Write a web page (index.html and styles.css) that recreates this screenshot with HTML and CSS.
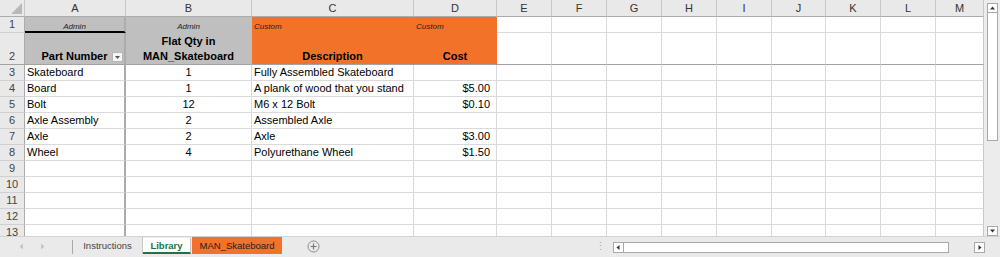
FILE: index.html
```html
<!DOCTYPE html>
<html lang="en">
<head>
    <meta charset="UTF-8">
    <title>Library</title>
    <link rel="stylesheet" href="styles.css">
</head>
<body>
    <div class="book">
        <div class="main">
            <div class="grid">
                <!-- column letters -->
                <div class="row hdr">
                    <div class="corner"><svg width="25" height="16"><polygon points="22,3 22,14 11,14" fill="#b9b9b9"/></svg></div>
                    <div>A</div><div>B</div><div>C</div><div>D</div><div>E</div><div>F</div><div>G</div>
                    <div>H</div><div>I</div><div>J</div><div>K</div><div>L</div><div>M</div>
                </div>

                <div class="row r1">
                    <div class="rh">1</div>
                    <div class="gray tag center a1">Admin</div>
                    <div class="gray tag center">Admin</div>
                    <div class="orange tag">Custom</div>
                    <div class="orange tag">Custom</div>
                    <div></div><div></div><div></div><div></div><div></div><div></div><div></div><div></div><div></div>
                </div>

                <div class="row r2">
                    <div class="rh">2</div>
                    <div class="gray hd">Part Number
                        <span class="filter"><svg width="9" height="8"><polygon points="2,3 7,3 4.5,6" fill="#555"/></svg></span>
                    </div>
                    <div class="gray hd"><span>Flat Qty in<br>MAN_Skateboard</span></div>
                    <div class="orange hd">Description</div>
                    <div class="orange hd">Cost</div>
                    <div></div><div></div><div></div><div></div><div></div><div></div><div></div><div></div><div></div>
                </div>

                <div class="row">
                    <div class="rh">3</div>
                    <div>Skateboard</div><div class="num">1</div><div>Fully Assembled Skateboard</div><div class="money"></div>
                    <div></div><div></div><div></div><div></div><div></div><div></div><div></div><div></div><div></div>
                </div>
                <div class="row">
                    <div class="rh">4</div>
                    <div>Board</div><div class="num">1</div><div>A plank of wood that you stand</div><div class="money">$5.00</div>
                    <div></div><div></div><div></div><div></div><div></div><div></div><div></div><div></div><div></div>
                </div>
                <div class="row">
                    <div class="rh">5</div>
                    <div>Bolt</div><div class="num">12</div><div>M6 x 12 Bolt</div><div class="money">$0.10</div>
                    <div></div><div></div><div></div><div></div><div></div><div></div><div></div><div></div><div></div>
                </div>
                <div class="row">
                    <div class="rh">6</div>
                    <div>Axle Assembly</div><div class="num">2</div><div>Assembled Axle</div><div class="money"></div>
                    <div></div><div></div><div></div><div></div><div></div><div></div><div></div><div></div><div></div>
                </div>
                <div class="row">
                    <div class="rh">7</div>
                    <div>Axle</div><div class="num">2</div><div>Axle</div><div class="money">$3.00</div>
                    <div></div><div></div><div></div><div></div><div></div><div></div><div></div><div></div><div></div>
                </div>
                <div class="row">
                    <div class="rh">8</div>
                    <div>Wheel</div><div class="num">4</div><div>Polyurethane Wheel</div><div class="money">$1.50</div>
                    <div></div><div></div><div></div><div></div><div></div><div></div><div></div><div></div><div></div>
                </div>

                <!-- empty rows -->
                <div class="row">
                    <div class="rh">9</div>
                    <div></div><div></div><div></div><div></div><div></div><div></div><div></div><div></div><div></div><div></div><div></div><div></div><div></div>
                </div>
                <div class="row">
                    <div class="rh">10</div>
                    <div></div><div></div><div></div><div></div><div></div><div></div><div></div><div></div><div></div><div></div><div></div><div></div><div></div>
                </div>
                <div class="row">
                    <div class="rh">11</div>
                    <div></div><div></div><div></div><div></div><div></div><div></div><div></div><div></div><div></div><div></div><div></div><div></div><div></div>
                </div>
                <div class="row">
                    <div class="rh">12</div>
                    <div></div><div></div><div></div><div></div><div></div><div></div><div></div><div></div><div></div><div></div><div></div><div></div><div></div>
                </div>
                <div class="row">
                    <div class="rh">13</div>
                    <div></div><div></div><div></div><div></div><div></div><div></div><div></div><div></div><div></div><div></div><div></div><div></div><div></div>
                </div>
            </div>

            <div class="vscroll">
                <div class="sbtn"><svg width="9" height="8"><polygon points="4.5,2.5 7,5.5 2,5.5" fill="#333"/></svg></div>
                <div class="vthumb"></div>
                <div class="sbtn down"><svg width="9" height="8"><polygon points="2,2.5 7,2.5 4.5,5.5" fill="#333"/></svg></div>
            </div>
        </div>

        <div class="tabbar">
            <div class="tabnav">
                <svg width="5" height="7"><polygon points="4,0.5 4,6.5 0.5,3.5" fill="#c4c4c4"/></svg>
                <svg width="5" height="7"><polygon points="1,0.5 1,6.5 4.5,3.5" fill="#c4c4c4"/></svg>
            </div>
            <div class="tabs">
                <div class="tab">Instructions</div>
                <div class="tab active">Library</div>
                <div class="tab orange-tab">MAN_Skateboard</div>
            </div>
            <div class="addsheet">
                <svg width="13" height="13"><circle cx="6.5" cy="6.5" r="5.5" fill="none" stroke="#8c8c8c"/><path d="M6.5 3.5v6M3.5 6.5h6" stroke="#777" stroke-width="1.2"/></svg>
            </div>
            <div class="dots">&#8942;</div>
            <div class="hscroll">
                <div class="sbtn"><svg width="9" height="9"><polygon points="2.5,4.5 5.5,2 5.5,7" fill="#333"/></svg></div>
                <div class="hthumb"></div>
                <div class="htrack"></div>
                <div class="sbtn"><svg width="9" height="9"><polygon points="3.5,2 6.5,4.5 3.5,7" fill="#333"/></svg></div>
            </div>
        </div>
    </div>
</body>
</html>
```

FILE: styles.css
```css
* {
    margin: 0;
    padding: 0;
    box-sizing: border-box;
}

body {
    font-family: "Liberation Sans", Arial, sans-serif;
    font-size: 11px;
    color: #000;
    background: #fff;
    width: 1000px;
    height: 257px;
    overflow: hidden;
}

.main {
    display: flex;
    height: 236px;
    overflow: hidden;
}

.grid {
    width: 984px;
}

.row {
    display: grid;
    grid-template-columns: 25px 101px 126px 162px 83px 55px 55px 55px 55px 55px 54px 55px 55px 48px;
    height: 16px;
}

.row > div {
    border-right: 1px solid #dadada;
    border-bottom: 1px solid #dadada;
    padding: 0 2px;
    line-height: 15px;
    white-space: nowrap;
    overflow: hidden;
}

/* frozen pane line after column A */
.row > div:nth-child(2) {
    border-right: 2px solid #acacac;
}

.row > div:last-child {
    border-right-color: #c8c8c8;
}

.hdr {
    height: 17px;
    background: #e9e9e9;
}

.row.hdr > div {
    text-align: center;
    color: #333;
    line-height: 16px;
    border-right: 1px solid #c8c8c8;
    border-bottom: 1px solid #ababab;
}

.corner {
    padding: 0 !important;
}

.corner svg {
    display: block;
}

.row > .rh {
    background: #e9e9e9;
    color: #444;
    text-align: center;
    padding: 0;
    border-right: 1px solid #ababab;
    border-bottom: 1px solid #d0d0d0;
}

.r2 {
    height: 32px;
}

.r2 > div {
    display: flex;
    flex-direction: column;
    justify-content: flex-end;
}

/* frozen pane line under row 2 */
.row.r2 > div {
    border-bottom: 1px solid #a2a2a2;
}

.row > .gray {
    background: #bfbfbf;
    border-color: transparent;
}

.row > .orange {
    background: #f27229;
    border-color: transparent;
}

.row > .a1 {
    border-bottom: 2px solid #000;
}

.tag {
    font-style: italic;
    font-size: 8px;
    color: #222;
    padding-top: 2px !important;
}

.center {
    text-align: center;
}

.hd {
    font-weight: bold;
    text-align: center;
    position: relative;
}

.filter {
    position: absolute;
    right: 1px;
    bottom: 2px;
    width: 11px;
    height: 10px;
    border: 1px solid #b5b5b5;
    background: #f5f5f5;
}

.filter svg {
    display: block;
}

.num {
    text-align: center;
}

.row > .money {
    text-align: right;
    padding-right: 6px;
}

/* scrollbars */
.vscroll {
    width: 16px;
    background: #ececec;
    display: flex;
    flex-direction: column;
    align-items: center;
    padding: 3px 0 0 1px;
}

.sbtn {
    width: 11px;
    height: 10px;
    border: 1px solid #a9a9a9;
    background: #fff;
}

.sbtn svg {
    display: block;
}

.vthumb {
    width: 11px;
    height: 128px;
    border: 1px solid #a9a9a9;
    border-top: none;
    background: #fff;
}

.vscroll .down {
    margin-top: auto;
    margin-bottom: 0;
}

.tabbar {
    display: flex;
    height: 21px;
    background: #eaeaea;
    border-top: 1px solid #d2d2d2;
}

.tabnav {
    width: 72px;
    display: flex;
    align-items: center;
    gap: 16px;
    padding: 0 0 2px 19px;
}

.tabs {
    display: flex;
    border-left: 1px solid #a8a8a8;
    margin-top: 3px;
    height: 14px;
}

.tab {
    margin-top: -3px;
    height: 17px;
    line-height: 17px;
    font-size: 9.5px;
    color: #444;
    text-align: center;
    border-right: 1px solid #c6c6c6;
}

.tab:first-child {
    width: 70px;
}

.tab.active {
    width: 48px;
    background: #fff;
    color: #217346;
    font-weight: bold;
    border-bottom: 2px solid #217346;
    line-height: 16px;
    margin-top: -2px;
    height: 16px;
}

.orange-tab {
    width: 90px;
    margin-left: 1px;
    background: #f27229;
    color: #222;
    border-right: none;
}

.addsheet {
    margin-left: 25px;
    padding-top: 3px;
}

.addsheet svg {
    display: block;
}

.dots {
    margin-left: auto;
    color: #a8a8a8;
    line-height: 19px;
    font-size: 11px;
}

.hscroll {
    display: flex;
    margin: 5px 15px 0 7px;
    height: 11px;
}

.hscroll .sbtn {
    width: 11px;
    height: 11px;
}

.hthumb {
    width: 325px;
    height: 11px;
    border: 1px solid #a9a9a9;
    border-left: none;
    background: #fff;
}

.htrack {
    width: 25px;
}
```
